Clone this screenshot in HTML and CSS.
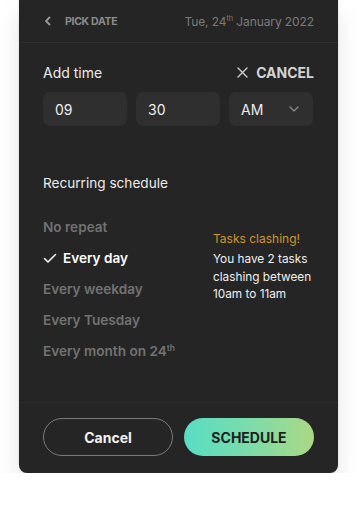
FILE: index.html
```html
<!DOCTYPE html>
<html>
<head>
<meta charset="utf-8">
<link rel="stylesheet" href="styles.css">
</head>
<body>
<div class="card">
  <div class="header">
    <div class="back">
      <svg class="chev" width="8" height="10" viewBox="0 0 8 10"><path d="M5.5 1.5 L2 5 L5.5 8.5" fill="none" stroke="#9a9a9a" stroke-width="1.8" stroke-linecap="round" stroke-linejoin="round"/></svg>
      <span>PICK DATE</span>
    </div>
    <div class="date">Tue, 24<sup>th</sup> January 2022</div>
  </div>
  <div class="body">
    <div class="row-title">
      <span class="label">Add time</span>
      <span class="cancel-link">
        <svg width="11" height="11" viewBox="0 0 11 11"><path d="M1 1 L10 10 M10 1 L1 10" stroke="#cfcfcf" stroke-width="1.4" stroke-linecap="round"/></svg>
        CANCEL
      </span>
    </div>
    <div class="inputs">
      <div class="box">09</div>
      <div class="box">30</div>
      <div class="box sel">AM
        <svg width="10" height="6" viewBox="0 0 10 6"><path d="M1 1 L5 5 L9 1" fill="none" stroke="#8a8a8a" stroke-width="1.3" stroke-linecap="round" stroke-linejoin="round"/></svg>
      </div>
    </div>
    <div class="label rec">Recurring schedule</div>
    <div class="split">
      <ul class="options">
        <li><span>No repeat</span></li>
        <li class="active"><svg width="14" height="11" viewBox="0 0 14 11"><path d="M1.5 5.5 L5 9 L12.5 1.5" fill="none" stroke="#ffffff" stroke-width="1.5" stroke-linecap="round" stroke-linejoin="round"/></svg><span>Every day</span></li>
        <li><span>Every weekday</span></li>
        <li><span>Every Tuesday</span></li>
        <li><span>Every month on 24<sup>th</sup></span></li>
      </ul>
      <div class="clash">
        <div class="clash-title">Tasks clashing!</div>
        <div class="clash-text">You have 2 tasks clashing between 10am to 11am</div>
      </div>
    </div>
  </div>
  <div class="footer">
    <button class="btn ghost">Cancel</button>
    <button class="btn primary">SCHEDULE</button>
  </div>
</div>
</body>
</html>
```
FILE: styles.css
```css
* { box-sizing: border-box; }
html, body { margin: 0; padding: 0; background: #ffffff; }
body { font-family: Inter, "Noto Sans", sans-serif; }
.card {
  margin-left: 19px;
  width: 319px;
  height: 473px;
  background: #252525;
  border-radius: 0 0 8px 8px;
  box-shadow: 0 12px 24px rgba(0,0,0,0.10), 0 0 2px rgba(0,0,0,0.15);
  display: flex;
  flex-direction: column;
}
.header {
  height: 43px;
  border-bottom: 1px solid #2f2f2f;
  display: flex;
  align-items: center;
  justify-content: space-between;
  padding: 0 24px 0 25px;
}
.back { display: flex; align-items: center; gap: 13px; color: #8c8c8c; font-size: 10.5px; font-weight: 700; letter-spacing: -0.3px; }
.chev { display: block; }
.date { color: #7a7a7a; font-size: 12px; letter-spacing: -0.1px; }
sup { font-size: 0.62em; vertical-align: 0; position: relative; top: -0.55em; line-height: 0; }
.body { flex: 1; padding: 0 24px; }
.row-title { display: flex; justify-content: space-between; align-items: center; margin-top: 19px; height: 20px; }
.label { color: #ececec; font-size: 14px; }
.cancel-link { color: #d4d4d4; font-size: 14px; font-weight: 700; display: flex; align-items: center; gap: 8px; }
.inputs { display: grid; grid-template-columns: 84px 84px 84px; gap: 9px; margin-top: 10px; }
.box {
  height: 34px;
  background: #2f2f2f;
  border-radius: 7px;
  color: #ececec;
  font-size: 14px;
  display: flex;
  align-items: center;
  padding: 0 12px;
}
.box.sel { justify-content: space-between; padding-right: 14px; }
.rec { margin-top: 47px; line-height: 20px; font-size: 13.6px; }
.split { display: flex; justify-content: space-between; margin-top: 24px; }
.options { list-style: none; margin: 0; padding: 0; }
.options li {
  height: 31px;
  line-height: 20px;
  color: #727272;
  font-size: 13.6px;
  font-weight: 600;
  display: flex;
  align-items: flex-start;
}
.options li.active { color: #ffffff; gap: 6px; }
.options li.active svg { margin-top: 5px; }
.clash { width: 101px; margin-top: 13px; }
.clash-title { color: #cf942e; font-size: 12px; line-height: 18px; }
.clash-text { color: #f0f0f0; font-size: 11.8px; line-height: 17.5px; margin-top: 3px; }
.footer {
  border-top: 1px solid #2c2c2c;
  height: 71px;
  padding: 15px 24px 0;
  display: flex;
  gap: 11px;
}
.btn {
  width: 130px;
  height: 38px;
  border-radius: 19px;
  font-family: Inter, "Noto Sans", sans-serif;
  font-size: 14px;
  font-weight: 700;
  cursor: pointer;
}
.ghost { background: transparent; border: 1px solid #7a7a7a; color: #f2f2f2; }
.primary { border: none; color: #1e1e1e; background: linear-gradient(90deg, #59dcc4 0%, #7bdcaa 50%, #abd884 100%); }
```
